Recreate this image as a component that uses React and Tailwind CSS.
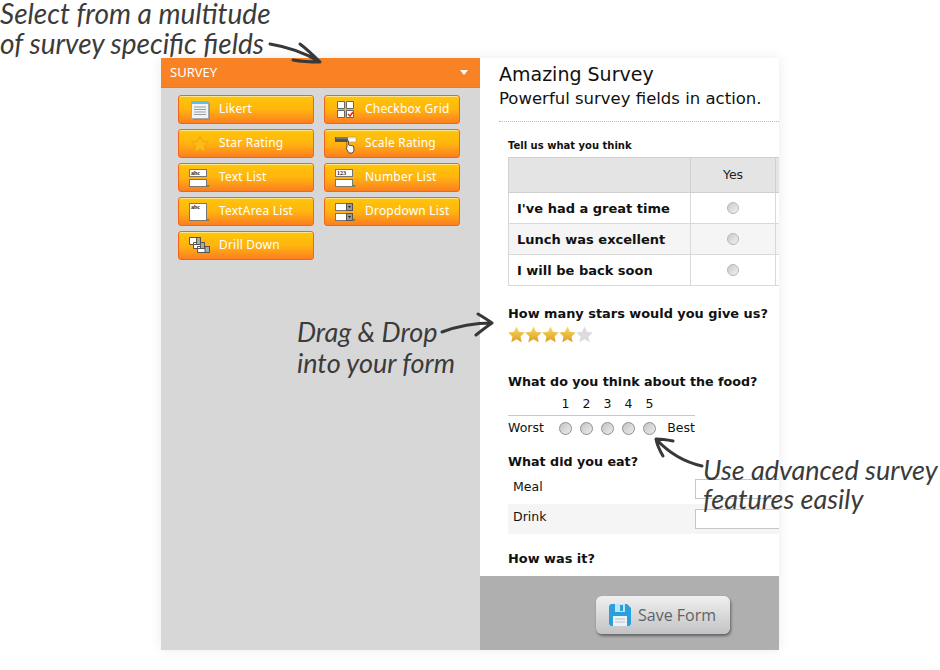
const LikertIcon = () => (
  <svg width="20" height="20" viewBox="0 0 20 20">
    <rect x="1.500" y="1.500" width="17" height="17" fill="#f1f4f6" stroke="#a8a8a8" />
    <rect x="2" y="2" width="16" height="2" fill="#5bc0ee" />
    <path d="M4 7h12M4 9.500h12M4 12h12M4 14.500h12" stroke="#9a9a9a" />
    <path d="M19.500 3v16.500H3" fill="none" stroke="#b07a2a" opacity=".6" />
  </svg>
)

const GridIcon = () => (
  <svg width="20" height="20" viewBox="0 0 20 20">
    <path d="M1.500 1.500h7v7h-7zM10.500 1.500h7v7h-7zM1.500 10.500h7v7h-7zM10.500 10.500h7v7h-7z" fill="#fff" stroke="#666" />
    <path d="M12 14l2 2 3-4" fill="none" stroke="#d9341c" strokeWidth="1.500" />
  </svg>
)

const StarIcon = () => (
  <svg width="18" height="18" viewBox="0 0 20 20">
    <path d="M10 1l2.800 6 6.700.7-5 4.500 1.400 6.600L10 15.400 4.100 18.800l1.400-6.600-5-4.500L7.200 7z" fill="#fdbb1a" stroke="#f0a010" />
  </svg>
)

const ScaleIcon = () => (
  <svg width="22" height="20" viewBox="0 0 22 20">
    <rect x="0" y="3" width="13" height="5" fill="#555" />
    <rect x="13" y="3" width="8" height="5" fill="#fff" stroke="#888" strokeWidth=".5" />
    <path d="M2 3v2M4 3v2M6 3v2M8 3v2M10 3v2M12 3v2M15 3v2M17 3v2M19 3v2" stroke="#bbb" strokeWidth=".7" />
    <path d="M12 7h1.500v4l5 1 .5 5-2 2h-3l-3-5 1-.5z" fill="#fff" stroke="#333" strokeWidth=".8" />
  </svg>
)

const Caret = () => <path d="M17 17h4l-2 2.500z" fill="#4f9a2f" />

const TextListIcon = ({ label = 'abc' }) => (
  <svg width="22" height="20" viewBox="0 0 22 20">
    <rect x="0.500" y="1.500" width="17" height="7" fill="#fff" stroke="#777" />
    <rect x="0.500" y="11.500" width="17" height="7" fill="#fff" stroke="#777" />
    <text x="2" y="7" fontSize="6" fontWeight="700" fontFamily="'Liberation Serif', serif" fill="#222">{label}</text>
    <Caret />
  </svg>
)

const TextAreaIcon = () => (
  <svg width="22" height="20" viewBox="0 0 22 20">
    <rect x="0.500" y="1.500" width="17" height="17" fill="#fff" stroke="#777" />
    <text x="2" y="7" fontSize="6" fontWeight="700" fontFamily="'Liberation Serif', serif" fill="#222">abc</text>
    <Caret />
  </svg>
)

const DropdownIcon = () => (
  <svg width="22" height="20" viewBox="0 0 22 20">
    <rect x="0.500" y="1.500" width="17" height="7" fill="#fff" stroke="#777" />
    <rect x="0.500" y="11.500" width="17" height="7" fill="#fff" stroke="#777" />
    <rect x="11.500" y="1.500" width="6" height="7" fill="#999" stroke="#555" />
    <rect x="11.500" y="11.500" width="6" height="7" fill="#999" stroke="#555" />
    <path d="M13 4h3l-1.500 2zM13 14h3l-1.500 2z" fill="#222" />
    <Caret />
  </svg>
)

const DrillIcon = () => (
  <svg width="22" height="20" viewBox="0 0 22 20">
    <path d="M0.500 1.500h11v7h-11zM4.500 6.500h11v6h-11zM8.500 10.500h12v6h-12z" fill="#fff" stroke="#555" />
    <path d="M7.500 1.500h4v7h-4zM11.500 6.500h4v6h-4zM16 10.500h4.500v6H16z" fill="#aaa" stroke="#555" />
  </svg>
)

const fields = [
  ['Likert', <LikertIcon />],
  ['Checkbox Grid', <GridIcon />],
  ['Star Rating', <StarIcon />],
  ['Scale Rating', <ScaleIcon />],
  ['Text List', <TextListIcon />],
  ['Number List', <TextListIcon label="123" />],
  ['TextArea List', <TextAreaIcon />],
  ['Dropdown List', <DropdownIcon />],
  ['Drill Down', <DrillIcon />],
]

const FieldButton = ({ label, icon }) => (
  <div className="h-[29px] rounded-[3px] border border-[#f4641c] bg-gradient-to-b from-[#ffc60a] via-[#ffb40e] to-[#fb7d1f] shadow-[inset_0_1px_0_#ffe48a] flex items-center">
    <div className="w-[40px] flex justify-center pl-[2px] shrink-0">{icon}</div>
    <span className="text-[12px] text-white tracking-[0.2px] font-['Noto_Sans',sans-serif] -mt-[2px]">{label}</span>
  </div>
)

const Radio = () => (
  <span className="inline-block w-[12px] h-[12px] rounded-full border border-[#b8b8b8] bg-gradient-to-br from-[#c9c9c9] to-[#f2f2f2]" />
)

const ScaleRadio = () => (
  <span className="inline-block w-[13px] h-[13px] rounded-full border border-[#8f8f8f] bg-gradient-to-br from-[#c4c4c4] to-[#ececec]" />
)

const Star = ({ on }) => (
  <svg width="17" height="17" viewBox="0 0 20 20">
    <defs>
      <linearGradient id="gold" x1="0" y1="0" x2="0" y2="1">
        <stop offset="0" stopColor="#f8dc6a" />
        <stop offset="1" stopColor="#dc9c1c" />
      </linearGradient>
    </defs>
    <path d="M10 .5l2.900 6.300 6.900.8-5.100 4.700 1.400 6.800L10 15.700l-6.100 3.400 1.400-6.800L.2 7.600l6.900-.8z" fill={on ? 'url(#gold)' : '#dcdcdc'} />
  </svg>
)

const rows = ["I've had a great time", 'Lunch was excellent', 'I will be back soon']

const Likert = () => (
  <table className="border-collapse table-fixed w-[330px] text-[12.500px]">
    <tbody>
      <tr className="h-[35px] bg-[#e4e4e4]">
        <td className="w-[182px] border border-[#d0d0d0]" />
        <td className="w-[85px] border border-[#d0d0d0] text-center text-[#222]">Yes</td>
        <td className="border border-[#d0d0d0]" />
      </tr>
      {rows.map((row, i) => (
        <tr key={row} className={i === 1 ? 'h-[31px] bg-[#f5f5f5]' : 'h-[31px] bg-white'}>
          <td className="border border-[#d8d8d8] pl-[8px] pt-[2px] font-bold text-[#111] text-[13px] whitespace-nowrap">{row}</td>
          <td className="border border-[#d8d8d8] pt-[2px] text-center leading-none"><Radio /></td>
          <td className="border border-[#d8d8d8]" />
        </tr>
      ))}
    </tbody>
  </table>
)

const Arrow = ({ className, width, height, viewBox, d }) => (
  <svg className={className} width={width} height={height} viewBox={viewBox} fill="none" stroke="#383838" strokeWidth="3" strokeLinecap="round" strokeLinejoin="round">
    <path d={d} />
  </svg>
)

const note = "absolute text-[#3b3b3b] italic font-['Lato',sans-serif] whitespace-nowrap"

export default function App() {
  return (
    <div className="relative w-[940px] h-[670px] bg-white overflow-hidden font-['DejaVu_Sans',sans-serif] pt-[58px] pl-[161px]">
      <div className="flex w-[618px] h-[592px] shadow-[0_0_12px_rgba(0,0,0,0.08)]">
        <aside className="w-[319px] shrink-0 bg-[#d7d7d7]">
          <div className="h-[30px] bg-[#f98324] border-b border-[#ee7a1e] flex items-center justify-between pl-[9px] pr-[12px]">
            <span className="text-[13px] text-white font-['Noto_Sans',sans-serif]">SURVEY</span>
            <span className="w-0 h-0 border-x-[4px] border-x-transparent border-t-[5px] border-t-white" />
          </div>
          <div className="grid grid-cols-[136px_136px] gap-x-[10px] gap-y-[5px] pl-[17px] pt-[7px]">
            {fields.map(([label, icon]) => (
              <FieldButton key={label} label={label} icon={icon} />
            ))}
          </div>
        </aside>

        <main className="w-[299px] flex flex-col bg-white overflow-hidden">
          <div className="flex-1 min-h-0 overflow-hidden">
            <div className="ml-[19px] pt-[5px] pb-[9px] border-b border-dotted border-[#bdbdbd] text-[#111]">
              <h1 className="text-[19px] leading-[23px]">Amazing Survey</h1>
              <p className="text-[16.500px] leading-[26px] whitespace-nowrap">Powerful survey fields in action.</p>
            </div>

            <div className="pl-[28px] text-[#111]">
              <p className="text-[10px] font-bold mt-[17px] leading-[14px]">Tell us what you think</p>
              <div className="mt-[4px]"><Likert /></div>

              <p className="text-[12.900px] font-bold mt-[20px] leading-[16px] whitespace-nowrap">How many stars would you give us?</p>
              <div className="flex mt-[4px]">
                {[1, 2, 3, 4, 5].map(n => <Star key={n} on={n < 5} />)}
              </div>

              <p className="text-[12.700px] font-bold mt-[31px] leading-[16px] whitespace-nowrap">What do you think about the food?</p>
              <div className="w-[187px] mt-[4px] text-[12.500px]">
                <div className="flex h-[22px] pl-[47px] border-b border-[#c8c8c8] items-center">
                  {[1, 2, 3, 4, 5].map(n => <span key={n} className="w-[21px] text-center">{n}</span>)}
                </div>
                <div className="flex h-[24px] items-center justify-between">
                  <span>Worst</span>
                  <div className="flex gap-[8px] ml-[3px]">
                    {[1, 2, 3, 4, 5].map(n => <ScaleRadio key={n} />)}
                  </div>
                  <span>Best</span>
                </div>
              </div>

              <p className="text-[12.700px] font-bold mt-[14px] leading-[16px]">What did you eat?</p>
              <div className="text-[12.500px] mt-[4px] w-[280px]">
                <div className="flex h-[30px] items-center">
                  <span className="w-[187px] pl-[5px] -mt-[4px]">Meal</span>
                  <span className="flex-1 h-[20px] border border-[#c6c6c6] bg-white" />
                </div>
                <div className="flex h-[30px] items-center bg-[#f5f5f5]">
                  <span className="w-[187px] pl-[5px] -mt-[4px]">Drink</span>
                  <span className="flex-1 h-[20px] border border-[#c6c6c6] bg-white" />
                </div>
              </div>

              <p className="text-[12.900px] font-bold mt-[17px] leading-[16px]">How was it?</p>
            </div>
          </div>

          <footer className="h-[74px] shrink-0 bg-[#afafaf] pt-[20px] pl-[116px]">
            <button className="w-[134px] h-[38px] rounded-[6px] bg-gradient-to-b from-[#f0f0f0] to-[#c2c3c5] shadow-[1px_2px_3px_rgba(0,0,0,0.45)] flex items-center gap-[7px] pl-[13px] text-[#5f6367] text-[16px] font-['Open_Sans',sans-serif] whitespace-nowrap">
              <svg width="22" height="22" viewBox="0 0 22 22" className="shrink-0">
                <path d="M3 0h15l4 4v15a3 3 0 0 1-3 3H3a3 3 0 0 1-3-3V3a3 3 0 0 1 3-3z" fill="#2a9fdc" />
                <rect x="6" y="0" width="10" height="8" fill="#bfe4f5" />
                <rect x="11" y="1" width="3" height="6" fill="#2a9fdc" />
                <rect x="4" y="12" width="14" height="10" fill="#eef3f6" />
                <path d="M6 15h10M6 18h10" stroke="#b8c4ca" />
              </svg>
              Save Form
            </button>
          </footer>
        </main>
      </div>

      <div className={`${note} left-0 -top-[2px] text-[28px] leading-[30px]`}>
        Select from a multitude<br />of survey specific fields
      </div>
      <Arrow className="absolute left-[266px] top-[40px]" width="58" height="28" viewBox="0 0 58 28" d="M4 4C22 7 38 12 54 22M34 4C42 10 48 16 54 22C46 22 38 22 27 20" />

      <div className={`${note} left-[297px] top-[316px] text-[27px] leading-[31px]`}>
        Drag &amp; Drop<br />into your form
      </div>
      <Arrow className="absolute left-[438px] top-[312px]" width="58" height="26" viewBox="0 0 58 26" d="M4 20C20 14 36 11 54 11M40 2C45 5 50 8 54 11C48 15 43 19 38 23" />

      <div className={`${note} left-[703px] top-[455px] text-[27px] leading-[29px]`}>
        Use advanced survey<br />features easily
      </div>
      <Arrow className="absolute left-[650px] top-[434px]" width="56" height="36" viewBox="0 0 56 36" d="M52 32C34 28 18 18 6 5M23 7C18 6 12 5 6 5C7 11 10 17 13 22" />
    </div>
  )
}
